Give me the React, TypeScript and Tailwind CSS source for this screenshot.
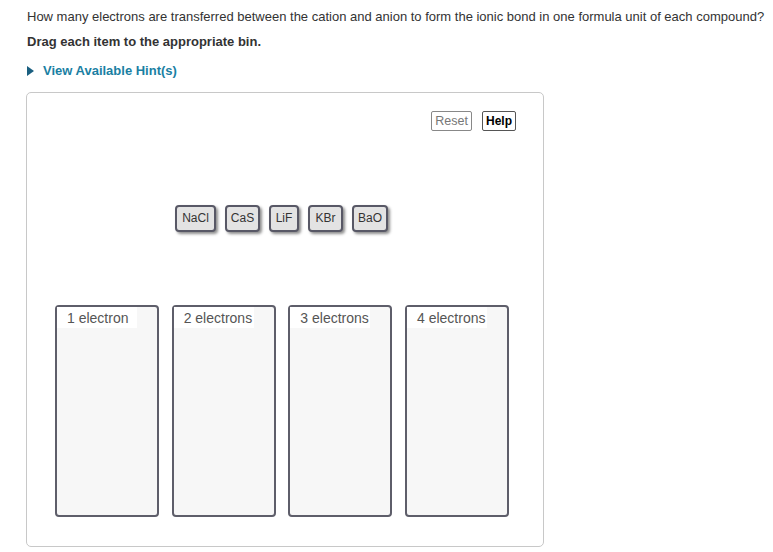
import React from "react";

const chips = [
  { t: "NaCl", w: 41 },
  { t: "CaS", w: 35 },
  { t: "LiF", w: 30 },
  { t: "KBr", w: 35 },
  { t: "BaO", w: 36 },
];

const bins = ["1 electron", "2 electrons", "3 electrons", "4 electrons"];

export default function App() {
  return (
    <div
      className="w-[773px] h-[552px] bg-white text-[#333333] overflow-hidden"
      style={{ fontFamily: '"Liberation Sans", Arial, sans-serif' }}
    >
      <div className="pl-[27px] pt-[9px]">
        <p className="text-[13px] leading-[16px] whitespace-nowrap">
          How many electrons are transferred between the cation and anion to form the ionic bond in one formula unit of each compound?
        </p>
        <p className="text-[13px] leading-[16px] font-bold mt-[9px]">
          Drag each item to the appropriate bin.
        </p>
        <div className="flex items-center mt-[13px] text-[13px] leading-[16px] font-bold text-[#1a7fa3]">
          <svg width="7" height="10" viewBox="0 0 7 10" className="mr-[9px]">
            <polygon points="0,0 7,5 0,10" fill="#1a5f80" />
          </svg>
          <span>View Available Hint(s)</span>
        </div>
      </div>
      <div className="ml-[26px] mt-[13px] w-[518px] h-[455px] border border-[#c8c8c8] rounded-[5px] relative">
        <div className="flex justify-end gap-[10px] pr-[27px] pt-[18px]">
          <div className="h-[20px] px-[3px] border border-[#888] rounded-[2px] text-[12.5px] leading-[18px] text-[#777]">
            Reset
          </div>
          <div className="h-[20px] px-[3px] border border-[#555] rounded-[2px] text-[12px] leading-[18px] font-bold text-black">
            Help
          </div>
        </div>
        <div className="flex gap-[9px] pl-[148px] mt-[74px]">
          {chips.map((c) => (
            <div
              key={c.t}
              className="h-[27px] border-2 border-[#585866] rounded-[4px] bg-[#e3e3e3] text-[12px] leading-[23px] text-[#333] text-center shadow-[2px_2px_3px_rgba(0,0,0,0.45)]"
              style={{ width: c.w }}
            >
              {c.t}
            </div>
          ))}
        </div>
        <div className="flex gap-[12.67px] pl-[28px] mt-[73px]">
          {bins.map((b) => (
            <div
              key={b}
              className="w-[104px] h-[212px] border-2 border-[#5e5e6a] rounded-[4px] bg-[#f7f7f7]"
            >
              <div className="w-[80px] h-[21px] bg-white pl-[10px] text-[14px] leading-[22px] text-[#555] whitespace-nowrap">
                {b}
              </div>
            </div>
          ))}
        </div>
      </div>
    </div>
  );
}
